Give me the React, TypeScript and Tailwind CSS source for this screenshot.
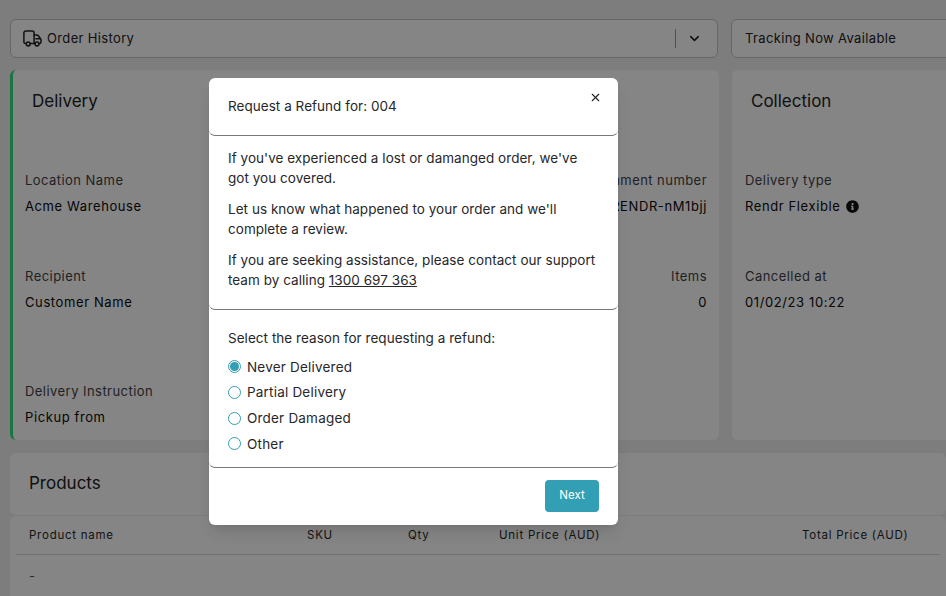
import { ChevronDown, X } from 'lucide-react';
import { FaInfoCircle } from 'react-icons/fa';

function Field({ label, value, right, className }: { label: string; value: string; right?: boolean; className?: string }) {
    return (
        <div className={`${right ? 'text-right' : ''} ${className ?? ''}`}>
            <div className="text-[13px] leading-[20px] text-[#3f3f46] tracking-[0.45px]">{label}</div>
            <div className="mt-[6px] text-[13px] leading-[20px] text-[#0a0a0a] tracking-[0.6px]">{value}</div>
        </div>
    );
}

function Radio({ label, checked }: { label: string; checked?: boolean }) {
    return (
        <label className="flex items-center h-[25.7px] gap-[6px]">
            <span className="w-[13px] h-[13px] rounded-full border border-[#329fb4] flex items-center justify-center shrink-0">
                {checked && <span className="w-[9px] h-[9px] rounded-full bg-[#329fb4]" />}
            </span>
            <span className="text-[13.5px] text-[#27272a] tracking-[0.2px]">{label}</span>
        </label>
    );
}

function TruckIcon() {
    return (
        <svg width="19" height="17" viewBox="0 0 19 17" fill="none" stroke="#222" strokeWidth="1.5" strokeLinejoin="round" strokeLinecap="round">
            <path d="M3.2 13.5H2.5a1.6 1.6 0 0 1-1.6-1.6V3a2 2 0 0 1 2-2h6.2a2 2 0 0 1 2 2v10.5H7.2" />
            <path d="M11.1 5h2.6a2 2 0 0 1 1.6.8l2.3 3a2 2 0 0 1 .4 1.2v2a1.5 1.5 0 0 1-1.5 1.5h-.3M11.1 13.5h1" />
            <circle cx="5.2" cy="14" r="1.9" />
            <circle cx="14" cy="14" r="1.9" />
            <path d="M13 8.8h4" />
        </svg>
    );
}

export default function App() {
    return (
        <div className="relative h-[596px] w-[946px] overflow-hidden bg-[#efeff1] font-['Inter',sans-serif]">
            <div className="pl-[10px] pt-[19px]">
                {/* top selects */}
                <div className="flex gap-[13px]">
                    <div className="flex items-center w-[708px] h-[39px] shrink-0 rounded-[6px] border border-[#c4c4c8] bg-white pl-[12px] pr-[15px]">
                        <TruckIcon />
                        <span className="ml-[5px] text-[13px] text-[#222] tracking-[0.35px]">Order History</span>
                        <div className="ml-auto h-[19px] w-px bg-[#9a9a9a]" />
                        <ChevronDown size={15} strokeWidth={2.5} className="ml-[11px] text-[#222]" />
                    </div>
                    <div className="flex items-center w-[300px] h-[39px] shrink-0 rounded-[6px] border border-[#c4c4c8] bg-white pl-[13px]">
                        <span className="text-[13px] text-[#222] tracking-[0.35px]">Tracking Now Available</span>
                    </div>
                </div>

                {/* delivery + collection */}
                <div className="mt-[12px] flex gap-[13px]">
                    <div className="w-[709px] h-[370px] shrink-0 rounded-[6px] border-l-[3px] border-[#30e07e] bg-white pl-[12px] pr-[12px]">
                        <h2 className="pl-[7px] pt-[20px] text-[17px] leading-[22px] text-[#222]">Delivery</h2>
                        <div className="mt-[58px] flex justify-between">
                            <Field label="Location Name" value="Acme Warehouse" />
                            <Field right label="Consignment number" value="RENDR-nM1bjj" />
                        </div>
                        <div className="mt-[50px] flex justify-between">
                            <Field label="Recipient" value="Customer Name" />
                            <Field right label="Items" value="0" />
                        </div>
                        <Field className="mt-[69px]" label="Delivery Instruction" value="Pickup from" />
                    </div>
                    <div className="w-[300px] h-[370px] shrink-0 rounded-[6px] bg-white pl-[13px]">
                        <h2 className="pl-[6px] pt-[20px] text-[17px] leading-[22px] text-[#222]">Collection</h2>
                        <div className="mt-[58px]">
                            <div className="text-[13px] leading-[20px] text-[#3f3f46] tracking-[0.45px]">Delivery type</div>
                            <div className="mt-[6px] flex items-center gap-[6px] text-[13px] leading-[20px] text-[#0a0a0a] tracking-[0.6px]">
                                Rendr Flexible
                                <FaInfoCircle size={13} className="text-[#111] mt-px" />
                            </div>
                        </div>
                        <Field className="mt-[50px]" label="Cancelled at" value="01/02/23 10:22" />
                    </div>
                </div>

                {/* products */}
                <div className="mt-[13px] w-[936px] h-[62px] rounded-[6px] bg-white pl-[19px] flex items-center">
                    <h2 className="text-[17px] text-[#222]">Products</h2>
                </div>
                <div className="mt-px w-[936px] h-[100px] rounded-[6px] bg-white">
                    <div className="mx-[6px] grid grid-cols-[278px_101px_91px_303px_120px] pl-[13px] pt-px h-[39px] items-center whitespace-nowrap border-b border-[#d9d9dc] text-[11.5px] tracking-[0.75px] text-[#27272a]">
                        <span>Product name</span>
                        <span>SKU</span>
                        <span>Qty</span>
                        <span>Unit Price (AUD)</span>
                        <span>Total Price (AUD)</span>
                    </div>
                    <div className="pl-[19px] pt-[12px] text-[13px] text-[#555]">-</div>
                </div>
            </div>

            {/* refund modal */}
            <div className="absolute inset-0 bg-black/[0.48] pl-[209px] pt-[78px]">
                <div className="relative h-[447px] w-[409px] rounded-[6px] bg-white text-[13.5px] text-[#27272a] tracking-[0.04px] shadow-lg flex flex-col">
                    <div className="h-[58px] rounded-b-[6px] border-b border-[#77777a] px-[19px] pt-[18px] leading-[20px]">
                        Request a Refund for: 004
                    </div>
                    <button className="absolute right-[16px] top-[13px] text-[#222]">
                        <X size={13} strokeWidth={2} />
                    </button>
                    <div className="h-[174px] rounded-b-[6px] border-b border-[#77777a] px-[19px] pt-[13px] leading-[19.5px] flex flex-col gap-[12px]">
                        <p>If you've experienced a lost or damanged order, we've got you covered.</p>
                        <p>Let us know what happened to your order and we'll complete a review.</p>
                        <p>If you are seeking assistance, please contact our support team by calling <span className="underline">1300 697 363</span></p>
                    </div>
                    <div className="h-[158px] rounded-b-[6px] border-b border-[#77777a] px-[19px] pt-[18px]">
                        <p className="leading-[20px] mb-[6px]">Select the reason for requesting a refund:</p>
                        <Radio checked label="Never Delivered" />
                        <Radio label="Partial Delivery" />
                        <Radio label="Order Damaged" />
                        <Radio label="Other" />
                    </div>
                    <div className="flex justify-end pr-[19px] pt-[12px]">
                        <button className="h-[32px] w-[54px] rounded-[4px] bg-[#329fb4] text-[11.5px] text-white">Next</button>
                    </div>
                </div>
            </div>
        </div>
    );
}
